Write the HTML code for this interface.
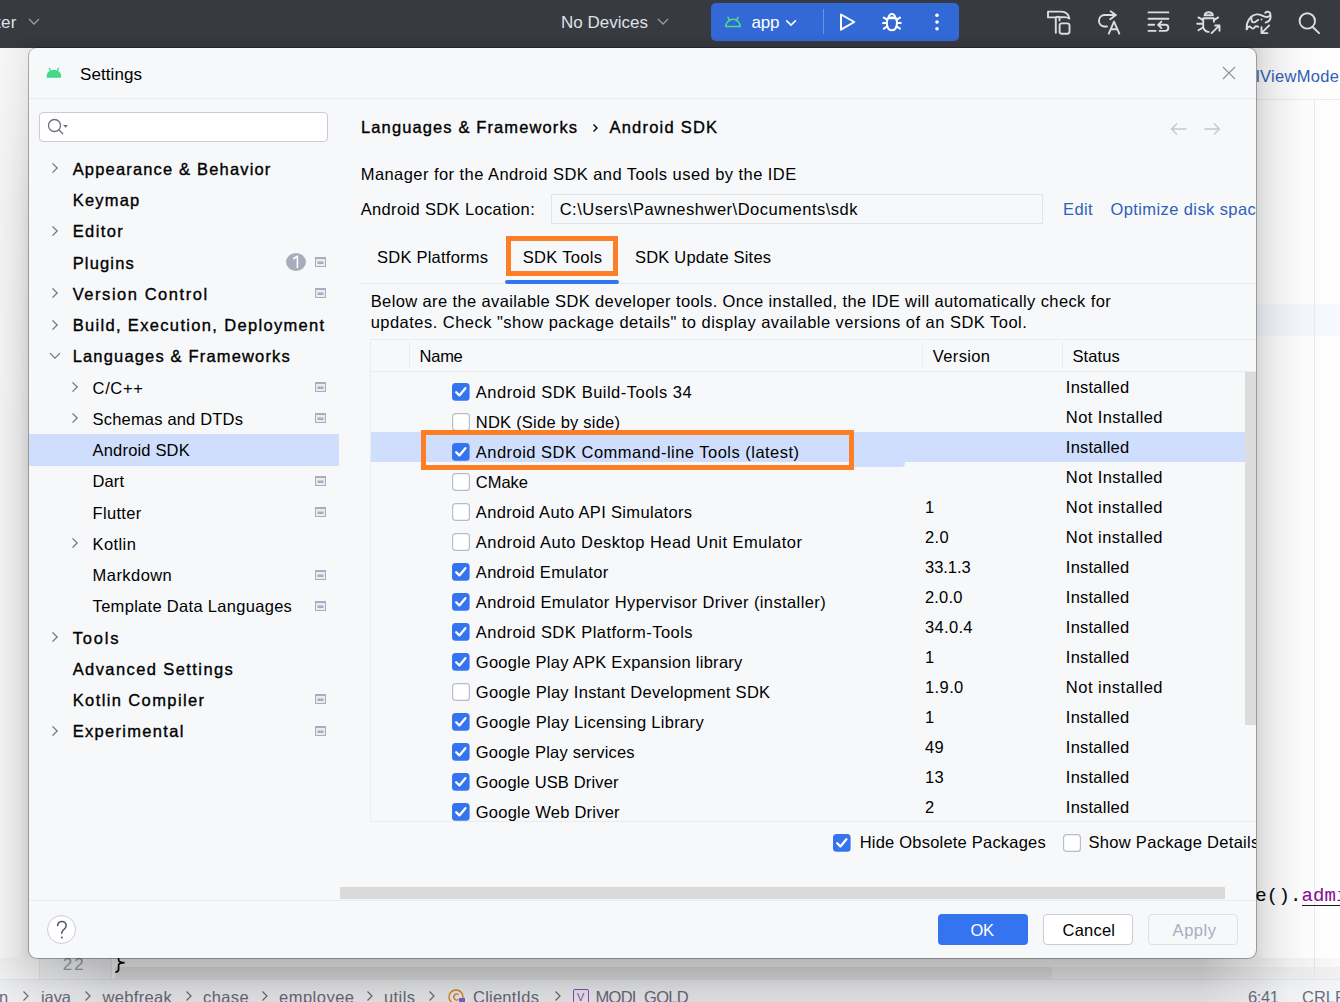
<!DOCTYPE html>
<html><head><meta charset="utf-8"><title>Settings</title><style>
*{margin:0;padding:0;box-sizing:border-box}
html,body{width:1340px;height:1002px;overflow:hidden;background:#fff;font-family:"Liberation Sans",sans-serif}
.a{position:absolute}
.t{position:absolute;white-space:nowrap;line-height:1}
svg{position:absolute;overflow:visible}
#dlg{position:absolute;left:0;top:0;width:1340px;height:1002px;clip-path:inset(48px 84px 44px 29px round 0 0 8px 8px)}
</style></head>
<body>
<div class="a" style="left:0px;top:48px;width:1340px;height:931px;background:#ffffff"></div>
<div class="a" style="left:0px;top:48px;width:29px;height:931px;background:#f9f9fa"></div>
<div class="a" style="left:1256px;top:99px;width:84px;height:1px;background:#ebecf0"></div>
<div class="t" style="left:1256.00px;top:68.00px;font-size:16.5px;color:#2f5fb8;font-weight:400;letter-spacing:0.324px;">lViewMode</div>
<div class="a" style="left:1256px;top:304px;width:84px;height:32px;background:#f6f9fe"></div>
<div class="a" style="left:0px;top:958px;width:1340px;height:21px;background:#ffffff"></div>
<div class="a" style="left:39px;top:958px;width:73px;height:21px;background:#f7f8fa;border-left:1px solid #ebecf0;border-right:1px solid #ebecf0"></div>
<div class="t" style="left:62.70px;top:956.00px;font-size:17px;color:#a0a2a8;font-weight:400;letter-spacing:1.994px;">22</div>
<div class="a" style="left:115px;top:967px;width:937px;height:12px;background:#ececec"></div>
<div class="a" style="left:1052px;top:967px;width:288px;height:12px;background:#f6f6f6"></div>
<svg style="left:0;top:0" width="1" height="1"><path d="M115.5 955.5 C117.8 955.5 118.6 956.5 118.6 958.5 V960 C118.6 961.8 119.8 962.6 124.6 962.6 M124.6 962.6 C119.8 962.6 118.6 963.4 118.6 965.2 V969.2 C118.6 971.2 117.6 972 115.3 972" fill="none" stroke="#080808" stroke-width="1.7"/></svg>
<div class="a" style="left:1314px;top:100px;width:1px;height:879px;background:#ebecf0"></div>
<div class="t" style="left:1255.30px;top:887.03px;font-size:19px;color:#080808;font-weight:400;letter-spacing:0.150px;font-family:'Liberation Mono';-webkit-text-stroke:0.1px currentColor">e().<span style='color:#871094'>admi</span></div>
<div class="a" style="left:1302px;top:904.8px;width:40px;height:1.6px;background:#1a1a1a"></div>
<div class="a" style="left:0px;top:979px;width:1340px;height:23px;background:#f7f8fa;border-top:1px solid #ebecf0"></div>
<div class="t" style="left:-1.00px;top:989.00px;font-size:16.5px;color:#6c707e;font-weight:400;letter-spacing:-1.672px;">n</div>
<div class="t" style="left:41.00px;top:989.00px;font-size:16.5px;color:#6c707e;font-weight:400;letter-spacing:-0.089px;">java</div>
<div class="t" style="left:102.60px;top:989.00px;font-size:16.5px;color:#6c707e;font-weight:400;letter-spacing:0.323px;">webfreak</div>
<div class="t" style="left:203.00px;top:989.00px;font-size:16.5px;color:#6c707e;font-weight:400;letter-spacing:0.396px;">chase</div>
<div class="t" style="left:279.00px;top:989.00px;font-size:16.5px;color:#6c707e;font-weight:400;letter-spacing:0.496px;">employee</div>
<div class="t" style="left:384.00px;top:989.00px;font-size:16.5px;color:#6c707e;font-weight:400;letter-spacing:0.414px;">utils</div>
<div class="t" style="left:473.00px;top:989.00px;font-size:16.5px;color:#6c707e;font-weight:400;letter-spacing:0.227px;">ClientIds</div>
<div class="t" style="left:595.60px;top:989.00px;font-size:16.5px;color:#6c707e;font-weight:400;letter-spacing:-0.750px;">MODI_GOLD</div>
<svg style="left:22px;top:990px" width="8" height="12"><path d="M1.5 1.5 L6 6 L1.5 10.5" fill="none" stroke="#6c707e" stroke-width="1.2"/></svg>
<svg style="left:83.6px;top:990px" width="8" height="12"><path d="M1.5 1.5 L6 6 L1.5 10.5" fill="none" stroke="#6c707e" stroke-width="1.2"/></svg>
<svg style="left:185px;top:990px" width="8" height="12"><path d="M1.5 1.5 L6 6 L1.5 10.5" fill="none" stroke="#6c707e" stroke-width="1.2"/></svg>
<svg style="left:261px;top:990px" width="8" height="12"><path d="M1.5 1.5 L6 6 L1.5 10.5" fill="none" stroke="#6c707e" stroke-width="1.2"/></svg>
<svg style="left:366px;top:990px" width="8" height="12"><path d="M1.5 1.5 L6 6 L1.5 10.5" fill="none" stroke="#6c707e" stroke-width="1.2"/></svg>
<svg style="left:428px;top:990px" width="8" height="12"><path d="M1.5 1.5 L6 6 L1.5 10.5" fill="none" stroke="#6c707e" stroke-width="1.2"/></svg>
<svg style="left:554px;top:990px" width="8" height="12"><path d="M1.5 1.5 L6 6 L1.5 10.5" fill="none" stroke="#6c707e" stroke-width="1.2"/></svg>
<svg style="left:448px;top:988px" width="18" height="16" viewBox="0 0 18 16"><circle cx="8" cy="9" r="7" fill="none" stroke="#e38a1f" stroke-width="1.4"/><path d="M10.5 6.5 A3 3 0 1 0 10.5 11.5" fill="none" stroke="#e38a1f" stroke-width="1.4"/><rect x="11" y="10" width="6" height="5" fill="#7a6cd6"/></svg>
<div class="a" style="left:573px;top:989px;width:16px;height:16px;border:1.3px solid #9b4bd1;border-radius:2px"></div>
<div class="t" style="left:577.00px;top:991.69px;font-size:11px;color:#9b4bd1;font-weight:400;letter-spacing:0.000px;">V</div>
<div class="t" style="left:1248.00px;top:989.00px;font-size:16.5px;color:#6c707e;font-weight:400;letter-spacing:-0.365px;">6:41</div>
<div class="t" style="left:1302.00px;top:989.00px;font-size:16.5px;color:#6c707e;font-weight:400;letter-spacing:-0.031px;">CRLF</div>
<div class="a" style="left:0px;top:0px;width:1340px;height:48px;background:#383a41"></div>
<div class="t" style="left:-4.00px;top:14.00px;font-size:17px;color:#dfe1e5;font-weight:400;letter-spacing:0.336px;">ter</div>
<div class="t" style="left:561.00px;top:14.00px;font-size:17px;color:#dfe1e5;font-weight:400;letter-spacing:0.009px;">No Devices</div>
<div class="a" style="left:711px;top:3px;width:248px;height:38px;background:#3369d6;border-radius:5px"></div>
<div class="a" style="left:823px;top:9px;width:1px;height:25px;background:#6d93e0"></div>
<div class="t" style="left:751.50px;top:14.00px;font-size:17px;color:#ffffff;font-weight:400;letter-spacing:-0.180px;">app</div>
<svg style="left:0;top:0" width="1340" height="48" viewBox="0 0 1340 48">
<g fill="none" stroke="#9a9da5" stroke-width="1.3"><path d="M29 19 L34 24 L39 19"/><path d="M658 19 L663 24 L668 19"/></g>
<g fill="none" stroke="#4fd98f" stroke-width="1.5" stroke-linecap="round">
<path d="M725.8 26.5 A7.2 7.2 0 0 1 740.2 26.5 Z"/><path d="M729.6 20.6 L728 17.2 M736.4 20.6 L738 17.2"/></g>
<path d="M786.2 20.4 L791 25.1 L795.9 20.4" fill="none" stroke="#fff" stroke-width="1.5"/>
<g fill="none" stroke="#fff" stroke-width="2" stroke-linejoin="round" stroke-linecap="round">
<path d="M841 14.5 L854.3 22 L841 29.7 Z"/>
<path d="M888.6 17.6 A3.3 3.6 0 0 1 895.2 17.6 Z"/>
<path d="M887.6 18.2 H896.2 C897.1 20.6 897.2 23.6 896.7 25.8 C896 28.8 894.2 30.3 891.9 30.3 C889.6 30.3 887.8 28.8 887.1 25.8 C886.6 23.6 886.7 20.6 887.6 18.2 Z"/>
<path d="M883.8 17.6 L887.4 19.8 M883 22.9 H886.8 M883.8 28.6 L887.4 26.4 M900 17.6 L896.4 19.8 M900.8 22.9 H897 M900 28.6 L896.4 26.4"/>
</g>
<g fill="#fff"><circle cx="937" cy="15.3" r="1.8"/><circle cx="937" cy="22" r="1.8"/><circle cx="937" cy="28.7" r="1.8"/></g>
<g fill="none" stroke="#dcdde1" stroke-width="1.9" stroke-linecap="round" stroke-linejoin="round">
<path d="M1048 11.6 H1061.5 C1065.5 11.6 1069 14.5 1069.3 18.6 C1067.5 17.3 1065 16.8 1062.5 17.3 H1059.5 C1058.5 16.5 1057 16.6 1055.8 17.4 H1051.5 L1050.5 17.4 H1048 Z"/>
<path d="M1055.8 17.6 V32.8"/><path d="M1059.5 17.6 V20.6"/>
<rect x="1059.6" y="23.4" width="9.9" height="10.4" rx="2.2"/>
<path d="M1115.6 15 H1104 A5.8 5.8 0 0 0 1104 26.5 H1107"/>
<path d="M1110.6 11.2 L1115.8 15 L1110.2 19.2"/>
<path d="M1108.8 33.6 L1114 21.6 L1119.3 33.6 M1110.6 29.3 H1117.5"/>
<path d="M1148.5 12.4 H1168.4 M1148.5 18.8 H1168.4 M1148.5 24.8 H1154.2 M1148.5 30.9 H1155.6"/>
<path d="M1158.4 24.8 H1165.3 A3.05 3.05 0 0 1 1165.3 30.9 H1159.6"/>
<path d="M1161.4 21.6 L1158.2 24.8 L1161.4 28.1"/>
<path d="M1204.6 15.2 A4.2 3.4 0 0 1 1212.9 15.2 Z"/>
<path d="M1213.9 21.8 V18.2 H1203.2 V26.4 A5.5 5.5 0 0 0 1208.7 31.9"/>
<path d="M1198.4 17.4 L1203.1 20.1 M1197.2 23.8 H1203.1 M1198.4 30.2 L1203.1 27.5 M1213.9 20.1 L1218.2 17.4"/>
<path d="M1211.6 33.1 L1219.5 25.4 M1215.2 25.5 H1219.5 V30.8"/>
<path d="M1246.7 29.2 C1246 22 1250 15.5 1256.5 14.4 C1260.5 13.8 1263 16.8 1266.5 17 C1269.3 17.2 1270.8 15.2 1270.2 13.3 C1269.6 11.4 1266.8 11.2 1265.2 12.8"/>
<path d="M1270.6 15.8 C1270.8 19.5 1268.5 22 1265.6 22.6"/>
<path d="M1251.4 17 C1251 20.5 1252.2 22.6 1253.6 22.4 C1255.5 22.2 1256.8 20.5 1258.2 19.9"/>
<path d="M1246.7 29.2 C1248 26 1249.8 26 1251 27.5 C1252.4 29.2 1253.6 28.8 1254.6 27.2 C1255.8 25.6 1257 26.3 1258.2 26.7"/>
<path d="M1269.2 25.4 L1261.5 33.1 M1261.5 27.2 V33.1 H1267.5"/>
<circle cx="1307.3" cy="20.9" r="7.7"/><path d="M1312.9 27.2 L1319.1 33.1"/>
</g>
<circle cx="1261.5" cy="19.4" r="0.9" fill="#dcdde1"/>
</svg>
<div class="a" style="left:0px;top:48px;width:40px;height:910px;background:linear-gradient(to right,rgba(0,0,0,0.036) 0px,rgba(0,0,0,0.06) 10px,rgba(0,0,0,0.10) 20px,rgba(0,0,0,0.16) 28px,rgba(0,0,0,0.2) 40px);-webkit-mask-image:linear-gradient(to bottom,rgba(0,0,0,0.35) 0px,rgba(0,0,0,0.8) 150px,#000 400px)"></div>
<div class="a" style="left:1245px;top:48px;width:95px;height:910px;background:linear-gradient(to right,rgba(0,0,0,0.2) 0px,rgba(0,0,0,0.157) 12px,rgba(0,0,0,0.106) 20px,rgba(0,0,0,0.059) 35px,rgba(0,0,0,0.02) 55px,rgba(0,0,0,0.01) 67px,rgba(0,0,0,0) 95px)"></div>
<div class="a" style="left:0px;top:958px;width:1340px;height:44px;background:linear-gradient(to bottom,rgba(0,0,0,0.28) 0px,rgba(0,0,0,0.25) 9px,rgba(0,0,0,0.2) 21px,rgba(0,0,0,0.15) 30px,rgba(0,0,0,0.11) 44px);-webkit-mask-image:linear-gradient(to right,rgba(0,0,0,0.3) 0px,rgba(0,0,0,0.65) 39px,#000 110px,#000 1200px,rgba(0,0,0,0.6) 1256px,rgba(0,0,0,0.25) 1290px,rgba(0,0,0,0.08) 1340px)"></div>
<div class="a" style="left:10px;top:36px;width:1266px;height:12px;background:linear-gradient(to bottom,rgba(0,0,0,0) 0px,rgba(0,0,0,0.1) 12px);-webkit-mask-image:linear-gradient(to right,transparent 0px,#000 30px,#000 1236px,transparent 1266px)"></div>
<div class="a" style="left:29px;top:48px;width:1227px;height:910px;background:#f7f8fa;border-radius:8px;box-shadow:0 0 0 1px rgba(0,0,0,0.28)"></div>
<div id="dlg">
<svg style="left:0;top:0" width="1" height="1"><path d="M46.8 77.8 V75.6 C46.8 72.2 50 70 53.9 70 C57.8 70 61 72.2 61 75.6 V77.8 Z" fill="#3ddc84"/><path d="M50.9 71.8 L49.3 68.3 M56.9 71.8 L58.5 68.3" stroke="#3ddc84" stroke-width="1.3" stroke-linecap="round"/><circle cx="50.5" cy="74.5" r="0.65" fill="#8aa8d8"/><circle cx="57.5" cy="74.5" r="0.65" fill="#c8b0c0"/></svg>
<div class="t" style="left:80.00px;top:66.00px;font-size:17px;color:#000000;font-weight:400;letter-spacing:0.083px;">Settings</div>
<svg style="left:1222px;top:66px" width="14" height="14"><path d="M1 1 L13 13 M13 1 L1 13" stroke="#8f929c" stroke-width="1.1"/></svg>
<div class="a" style="left:29px;top:98px;width:1227px;height:1px;background:#ebecf0"></div>
<div class="a" style="left:39px;top:112px;width:289px;height:30px;background:#fff;border:1px solid #c9ccd6;border-radius:4px"></div>
<svg style="left:47px;top:118px" width="24" height="18" viewBox="0 0 24 18"><circle cx="7.5" cy="7.5" r="6" fill="none" stroke="#6c707e" stroke-width="1.3"/><path d="M11.8 11.8 L16 16" stroke="#6c707e" stroke-width="1.3"/><path d="M16 7 H21 L18.5 9.8 Z" fill="#6c707e"/></svg>
<div class="a" style="left:29px;top:434px;width:310px;height:32px;background:#cfdefc"></div>
<div class="t" style="left:72.70px;top:161.00px;font-size:16.5px;color:#000000;font-weight:400;letter-spacing:1.169px;-webkit-text-stroke:0.35px #000000;">Appearance &amp; Behavior</div>
<svg style="left:50.8px;top:162.30px" width="8" height="12"><path d="M1.5 1.3 L6.2 6 L1.5 10.7" fill="none" stroke="#6c707e" stroke-width="1.2"/></svg>
<div class="t" style="left:72.70px;top:192.00px;font-size:16.5px;color:#000000;font-weight:400;letter-spacing:1.197px;-webkit-text-stroke:0.35px #000000;">Keymap</div>
<div class="t" style="left:72.70px;top:223.00px;font-size:16.5px;color:#000000;font-weight:400;letter-spacing:1.381px;-webkit-text-stroke:0.35px #000000;">Editor</div>
<svg style="left:50.8px;top:224.78px" width="8" height="12"><path d="M1.5 1.3 L6.2 6 L1.5 10.7" fill="none" stroke="#6c707e" stroke-width="1.2"/></svg>
<div class="t" style="left:72.70px;top:255.00px;font-size:16.5px;color:#000000;font-weight:400;letter-spacing:1.165px;-webkit-text-stroke:0.35px #000000;">Plugins</div>
<svg style="left:315px;top:257px" width="11" height="10" viewBox="0 0 11 10"><rect x="0.5" y="0.5" width="10" height="9" fill="#ebecf0" stroke="#a5afbf" stroke-width="1"/><rect x="0" y="0" width="11" height="2" fill="#a5afbf"/><rect x="2.5" y="4.5" width="6" height="2.5" fill="#a5afbf"/></svg>
<div class="t" style="left:72.70px;top:286.00px;font-size:16.5px;color:#000000;font-weight:400;letter-spacing:1.543px;-webkit-text-stroke:0.35px #000000;">Version Control</div>
<svg style="left:50.8px;top:287.26px" width="8" height="12"><path d="M1.5 1.3 L6.2 6 L1.5 10.7" fill="none" stroke="#6c707e" stroke-width="1.2"/></svg>
<svg style="left:315px;top:288px" width="11" height="10" viewBox="0 0 11 10"><rect x="0.5" y="0.5" width="10" height="9" fill="#ebecf0" stroke="#a5afbf" stroke-width="1"/><rect x="0" y="0" width="11" height="2" fill="#a5afbf"/><rect x="2.5" y="4.5" width="6" height="2.5" fill="#a5afbf"/></svg>
<div class="t" style="left:72.70px;top:317.00px;font-size:16.5px;color:#000000;font-weight:400;letter-spacing:1.331px;-webkit-text-stroke:0.35px #000000;">Build, Execution, Deployment</div>
<svg style="left:50.8px;top:318.50px" width="8" height="12"><path d="M1.5 1.3 L6.2 6 L1.5 10.7" fill="none" stroke="#6c707e" stroke-width="1.2"/></svg>
<div class="t" style="left:72.70px;top:348.00px;font-size:16.5px;color:#000000;font-weight:400;letter-spacing:1.164px;-webkit-text-stroke:0.35px #000000;">Languages &amp; Frameworks</div>
<svg style="left:49.2px;top:352.34px" width="12" height="8"><path d="M1 1.2 L6 6.2 L11 1.2" fill="none" stroke="#6c707e" stroke-width="1.2"/></svg>
<div class="t" style="left:92.60px;top:380.00px;font-size:16.5px;color:#000000;font-weight:400;letter-spacing:0.624px;">C/C++</div>
<svg style="left:70.8px;top:380.98px" width="8" height="12"><path d="M1.5 1.3 L6.2 6 L1.5 10.7" fill="none" stroke="#6c707e" stroke-width="1.2"/></svg>
<svg style="left:315px;top:382px" width="11" height="10" viewBox="0 0 11 10"><rect x="0.5" y="0.5" width="10" height="9" fill="#ebecf0" stroke="#a5afbf" stroke-width="1"/><rect x="0" y="0" width="11" height="2" fill="#a5afbf"/><rect x="2.5" y="4.5" width="6" height="2.5" fill="#a5afbf"/></svg>
<div class="t" style="left:92.60px;top:411.00px;font-size:16.5px;color:#000000;font-weight:400;letter-spacing:0.179px;">Schemas and DTDs</div>
<svg style="left:70.8px;top:412.22px" width="8" height="12"><path d="M1.5 1.3 L6.2 6 L1.5 10.7" fill="none" stroke="#6c707e" stroke-width="1.2"/></svg>
<svg style="left:315px;top:413px" width="11" height="10" viewBox="0 0 11 10"><rect x="0.5" y="0.5" width="10" height="9" fill="#ebecf0" stroke="#a5afbf" stroke-width="1"/><rect x="0" y="0" width="11" height="2" fill="#a5afbf"/><rect x="2.5" y="4.5" width="6" height="2.5" fill="#a5afbf"/></svg>
<div class="t" style="left:92.60px;top:442.00px;font-size:16.5px;color:#000000;font-weight:400;letter-spacing:0.174px;">Android SDK</div>
<div class="t" style="left:92.60px;top:473.00px;font-size:16.5px;color:#000000;font-weight:400;letter-spacing:0.076px;">Dart</div>
<svg style="left:315px;top:476px" width="11" height="10" viewBox="0 0 11 10"><rect x="0.5" y="0.5" width="10" height="9" fill="#ebecf0" stroke="#a5afbf" stroke-width="1"/><rect x="0" y="0" width="11" height="2" fill="#a5afbf"/><rect x="2.5" y="4.5" width="6" height="2.5" fill="#a5afbf"/></svg>
<div class="t" style="left:92.60px;top:505.00px;font-size:16.5px;color:#000000;font-weight:400;letter-spacing:0.308px;">Flutter</div>
<svg style="left:315px;top:507px" width="11" height="10" viewBox="0 0 11 10"><rect x="0.5" y="0.5" width="10" height="9" fill="#ebecf0" stroke="#a5afbf" stroke-width="1"/><rect x="0" y="0" width="11" height="2" fill="#a5afbf"/><rect x="2.5" y="4.5" width="6" height="2.5" fill="#a5afbf"/></svg>
<div class="t" style="left:92.60px;top:536.00px;font-size:16.5px;color:#000000;font-weight:400;letter-spacing:0.387px;">Kotlin</div>
<svg style="left:70.8px;top:537.18px" width="8" height="12"><path d="M1.5 1.3 L6.2 6 L1.5 10.7" fill="none" stroke="#6c707e" stroke-width="1.2"/></svg>
<div class="t" style="left:92.60px;top:567.00px;font-size:16.5px;color:#000000;font-weight:400;letter-spacing:0.442px;">Markdown</div>
<svg style="left:315px;top:570px" width="11" height="10" viewBox="0 0 11 10"><rect x="0.5" y="0.5" width="10" height="9" fill="#ebecf0" stroke="#a5afbf" stroke-width="1"/><rect x="0" y="0" width="11" height="2" fill="#a5afbf"/><rect x="2.5" y="4.5" width="6" height="2.5" fill="#a5afbf"/></svg>
<div class="t" style="left:92.60px;top:598.00px;font-size:16.5px;color:#000000;font-weight:400;letter-spacing:0.302px;">Template Data Languages</div>
<svg style="left:315px;top:601px" width="11" height="10" viewBox="0 0 11 10"><rect x="0.5" y="0.5" width="10" height="9" fill="#ebecf0" stroke="#a5afbf" stroke-width="1"/><rect x="0" y="0" width="11" height="2" fill="#a5afbf"/><rect x="2.5" y="4.5" width="6" height="2.5" fill="#a5afbf"/></svg>
<div class="t" style="left:72.70px;top:630.00px;font-size:16.5px;color:#000000;font-weight:400;letter-spacing:1.846px;-webkit-text-stroke:0.35px #000000;">Tools</div>
<svg style="left:50.8px;top:630.90px" width="8" height="12"><path d="M1.5 1.3 L6.2 6 L1.5 10.7" fill="none" stroke="#6c707e" stroke-width="1.2"/></svg>
<div class="t" style="left:72.70px;top:661.00px;font-size:16.5px;color:#000000;font-weight:400;letter-spacing:1.411px;-webkit-text-stroke:0.35px #000000;">Advanced Settings</div>
<div class="t" style="left:72.70px;top:692.00px;font-size:16.5px;color:#000000;font-weight:400;letter-spacing:1.395px;-webkit-text-stroke:0.35px #000000;">Kotlin Compiler</div>
<svg style="left:315px;top:694px" width="11" height="10" viewBox="0 0 11 10"><rect x="0.5" y="0.5" width="10" height="9" fill="#ebecf0" stroke="#a5afbf" stroke-width="1"/><rect x="0" y="0" width="11" height="2" fill="#a5afbf"/><rect x="2.5" y="4.5" width="6" height="2.5" fill="#a5afbf"/></svg>
<div class="t" style="left:72.70px;top:723.00px;font-size:16.5px;color:#000000;font-weight:400;letter-spacing:1.302px;-webkit-text-stroke:0.35px #000000;">Experimental</div>
<svg style="left:50.8px;top:724.62px" width="8" height="12"><path d="M1.5 1.3 L6.2 6 L1.5 10.7" fill="none" stroke="#6c707e" stroke-width="1.2"/></svg>
<svg style="left:315px;top:726px" width="11" height="10" viewBox="0 0 11 10"><rect x="0.5" y="0.5" width="10" height="9" fill="#ebecf0" stroke="#a5afbf" stroke-width="1"/><rect x="0" y="0" width="11" height="2" fill="#a5afbf"/><rect x="2.5" y="4.5" width="6" height="2.5" fill="#a5afbf"/></svg>
<div class="a" style="left:286px;top:253px;width:20px;height:18px;background:#a5adbd;border-radius:50%"></div>
<svg style="left:0;top:0" width="1" height="1"><path d="M293.2 259 L297.4 256.2 V268" fill="none" stroke="#fff" stroke-width="1.6" stroke-linejoin="round"/></svg>
<div class="t" style="left:361.00px;top:119.00px;font-size:16.5px;color:#000;font-weight:400;letter-spacing:1.117px;-webkit-text-stroke:0.35px #000;">Languages &amp; Frameworks</div>
<svg style="left:592px;top:123px" width="7" height="10"><path d="M1.5 1.5 L5 5 L1.5 8.5" fill="none" stroke="#000" stroke-width="1.4"/></svg>
<div class="t" style="left:609.50px;top:119.00px;font-size:16.5px;color:#000;font-weight:400;letter-spacing:1.214px;-webkit-text-stroke:0.35px #000;">Android SDK</div>
<svg style="left:1170px;top:122px" width="18" height="14"><path d="M1.5 7 H16.5 M7 1.5 L1.5 7 L7 12.5" fill="none" stroke="#c4c7ce" stroke-width="1.3"/></svg>
<svg style="left:1203px;top:122px" width="18" height="14"><path d="M1.5 7 H16.5 M11 1.5 L16.5 7 L11 12.5" fill="none" stroke="#c4c7ce" stroke-width="1.3"/></svg>
<div class="t" style="left:360.70px;top:166.00px;font-size:16.5px;color:#000;font-weight:400;letter-spacing:0.443px;">Manager for the Android SDK and Tools used by the IDE</div>
<div class="t" style="left:360.70px;top:201.00px;font-size:16.5px;color:#000;font-weight:400;letter-spacing:0.356px;">Android SDK Location:</div>
<div class="a" style="left:551px;top:194px;width:492px;height:30px;border:1.5px solid #e3e4e8;background:#f7f8fa"></div>
<div class="t" style="left:559.70px;top:201.00px;font-size:16.5px;color:#000;font-weight:400;letter-spacing:0.510px;">C:\Users\Pawneshwer\Documents\sdk</div>
<div class="t" style="left:1063.00px;top:201.00px;font-size:16.5px;color:#2f5fb8;font-weight:400;letter-spacing:0.393px;">Edit</div>
<div class="t" style="left:1110.50px;top:201.00px;font-size:16.5px;color:#2f5fb8;font-weight:400;letter-spacing:0.400px;">Optimize disk space</div>
<div class="t" style="left:377.00px;top:249.00px;font-size:16.5px;color:#000;font-weight:400;letter-spacing:0.236px;">SDK Platforms</div>
<div class="t" style="left:522.70px;top:249.00px;font-size:16.5px;color:#000;font-weight:400;letter-spacing:0.323px;">SDK Tools</div>
<div class="t" style="left:635.00px;top:249.00px;font-size:16.5px;color:#000;font-weight:400;letter-spacing:0.204px;">SDK Update Sites</div>
<div class="a" style="left:360px;top:283px;width:896px;height:1px;background:#ebecf0"></div>
<div class="a" style="left:505px;top:280px;width:114px;height:4px;background:#3574f0;border-radius:2px"></div>
<div class="a" style="left:506px;top:236px;width:112px;height:40px;border:5px solid #fe7e26"></div>
<div class="t" style="left:370.70px;top:293.00px;font-size:16.5px;color:#000;font-weight:400;letter-spacing:0.381px;">Below are the available SDK developer tools. Once installed, the IDE will automatically check for</div>
<div class="t" style="left:370.70px;top:314.00px;font-size:16.5px;color:#000;font-weight:400;letter-spacing:0.468px;">updates. Check "show package details" to display available versions of an SDK Tool.</div>
<div class="a" style="left:370px;top:339px;width:900px;height:483px;border:1px solid #ebecf0"></div>
<div class="a" style="left:371px;top:371px;width:900px;height:1px;background:#ebecf0"></div>
<div class="a" style="left:409px;top:342px;width:1px;height:26px;background:#ebecf0"></div>
<div class="a" style="left:922px;top:342px;width:1px;height:26px;background:#ebecf0"></div>
<div class="a" style="left:1062px;top:342px;width:1px;height:26px;background:#ebecf0"></div>
<div class="t" style="left:419.60px;top:348.00px;font-size:16.5px;color:#000;font-weight:400;letter-spacing:-0.272px;">Name</div>
<div class="t" style="left:932.80px;top:348.00px;font-size:16.5px;color:#000;font-weight:400;letter-spacing:0.361px;">Version</div>
<div class="t" style="left:1072.50px;top:348.00px;font-size:16.5px;color:#000;font-weight:400;letter-spacing:0.110px;">Status</div>
<div class="a" style="left:371px;top:432px;width:874px;height:30px;background:#cfdefc"></div>
<div class="a" style="left:853px;top:461px;width:52px;height:6px;background:#cfdefc;border-bottom-right-radius:4px"></div>
<div class="a" style="left:371px;top:372px;width:885px;height:449px;overflow:hidden">
<svg style="left:80.6px;top:11px" width="18" height="18" viewBox="0 0 18 18"><rect x="0" y="0" width="17.6" height="17.8" rx="3.5" fill="#3574f0"/><path d="M4.2 9.2 L7.4 12.4 L13.4 5.2" fill="none" stroke="#fff" stroke-width="2.3" stroke-linecap="round" stroke-linejoin="round"/></svg>
<div class="t" style="left:104.80px;top:12.00px;font-size:16.5px;color:#000;font-weight:400;letter-spacing:0.490px;">Android SDK Build-Tools 34</div>
<div class="t" style="left:694.80px;top:7.00px;font-size:16.5px;color:#000;font-weight:400;letter-spacing:0.245px;">Installed</div>
<svg style="left:81px;top:41px" width="18" height="18" viewBox="0 0 18 18"><rect x="0.6" y="0.6" width="16.8" height="16.8" rx="3" fill="#fff" stroke="#b9bdc9" stroke-width="1.2"/></svg>
<div class="t" style="left:104.80px;top:42.00px;font-size:16.5px;color:#000;font-weight:400;letter-spacing:0.231px;">NDK (Side by side)</div>
<div class="t" style="left:694.80px;top:37.00px;font-size:16.5px;color:#000;font-weight:400;letter-spacing:0.418px;">Not Installed</div>
<svg style="left:80.6px;top:71px" width="18" height="18" viewBox="0 0 18 18"><rect x="0" y="0" width="17.6" height="17.8" rx="3.5" fill="#3574f0"/><path d="M4.2 9.2 L7.4 12.4 L13.4 5.2" fill="none" stroke="#fff" stroke-width="2.3" stroke-linecap="round" stroke-linejoin="round"/></svg>
<div class="t" style="left:104.80px;top:72.00px;font-size:16.5px;color:#000;font-weight:400;letter-spacing:0.478px;">Android SDK Command-line Tools (latest)</div>
<div class="t" style="left:694.80px;top:67.00px;font-size:16.5px;color:#000;font-weight:400;letter-spacing:0.245px;">Installed</div>
<svg style="left:81px;top:101px" width="18" height="18" viewBox="0 0 18 18"><rect x="0.6" y="0.6" width="16.8" height="16.8" rx="3" fill="#fff" stroke="#b9bdc9" stroke-width="1.2"/></svg>
<div class="t" style="left:104.80px;top:102.00px;font-size:16.5px;color:#000;font-weight:400;letter-spacing:-0.016px;">CMake</div>
<div class="t" style="left:694.80px;top:97.00px;font-size:16.5px;color:#000;font-weight:400;letter-spacing:0.418px;">Not Installed</div>
<svg style="left:81px;top:131px" width="18" height="18" viewBox="0 0 18 18"><rect x="0.6" y="0.6" width="16.8" height="16.8" rx="3" fill="#fff" stroke="#b9bdc9" stroke-width="1.2"/></svg>
<div class="t" style="left:104.80px;top:132.00px;font-size:16.5px;color:#000;font-weight:400;letter-spacing:0.345px;">Android Auto API Simulators</div>
<div class="t" style="left:554.00px;top:127.00px;font-size:16.5px;color:#000;font-weight:400;letter-spacing:0.400px;">1</div>
<div class="t" style="left:694.80px;top:127.00px;font-size:16.5px;color:#000;font-weight:400;letter-spacing:0.493px;">Not installed</div>
<svg style="left:81px;top:161px" width="18" height="18" viewBox="0 0 18 18"><rect x="0.6" y="0.6" width="16.8" height="16.8" rx="3" fill="#fff" stroke="#b9bdc9" stroke-width="1.2"/></svg>
<div class="t" style="left:104.80px;top:162.00px;font-size:16.5px;color:#000;font-weight:400;letter-spacing:0.472px;">Android Auto Desktop Head Unit Emulator</div>
<div class="t" style="left:554.00px;top:157.00px;font-size:16.5px;color:#000;font-weight:400;letter-spacing:0.400px;">2.0</div>
<div class="t" style="left:694.80px;top:157.00px;font-size:16.5px;color:#000;font-weight:400;letter-spacing:0.493px;">Not installed</div>
<svg style="left:80.6px;top:191px" width="18" height="18" viewBox="0 0 18 18"><rect x="0" y="0" width="17.6" height="17.8" rx="3.5" fill="#3574f0"/><path d="M4.2 9.2 L7.4 12.4 L13.4 5.2" fill="none" stroke="#fff" stroke-width="2.3" stroke-linecap="round" stroke-linejoin="round"/></svg>
<div class="t" style="left:104.80px;top:192.00px;font-size:16.5px;color:#000;font-weight:400;letter-spacing:0.323px;">Android Emulator</div>
<div class="t" style="left:554.00px;top:187.00px;font-size:16.5px;color:#000;font-weight:400;letter-spacing:-0.049px;">33.1.3</div>
<div class="t" style="left:694.80px;top:187.00px;font-size:16.5px;color:#000;font-weight:400;letter-spacing:0.245px;">Installed</div>
<svg style="left:80.6px;top:221px" width="18" height="18" viewBox="0 0 18 18"><rect x="0" y="0" width="17.6" height="17.8" rx="3.5" fill="#3574f0"/><path d="M4.2 9.2 L7.4 12.4 L13.4 5.2" fill="none" stroke="#fff" stroke-width="2.3" stroke-linecap="round" stroke-linejoin="round"/></svg>
<div class="t" style="left:104.80px;top:222.00px;font-size:16.5px;color:#000;font-weight:400;letter-spacing:0.400px;">Android Emulator Hypervisor Driver (installer)</div>
<div class="t" style="left:554.00px;top:217.00px;font-size:16.5px;color:#000;font-weight:400;letter-spacing:0.182px;">2.0.0</div>
<div class="t" style="left:694.80px;top:217.00px;font-size:16.5px;color:#000;font-weight:400;letter-spacing:0.245px;">Installed</div>
<svg style="left:80.6px;top:251px" width="18" height="18" viewBox="0 0 18 18"><rect x="0" y="0" width="17.6" height="17.8" rx="3.5" fill="#3574f0"/><path d="M4.2 9.2 L7.4 12.4 L13.4 5.2" fill="none" stroke="#fff" stroke-width="2.3" stroke-linecap="round" stroke-linejoin="round"/></svg>
<div class="t" style="left:104.80px;top:252.00px;font-size:16.5px;color:#000;font-weight:400;letter-spacing:0.453px;">Android SDK Platform-Tools</div>
<div class="t" style="left:554.00px;top:247.00px;font-size:16.5px;color:#000;font-weight:400;letter-spacing:0.331px;">34.0.4</div>
<div class="t" style="left:694.80px;top:247.00px;font-size:16.5px;color:#000;font-weight:400;letter-spacing:0.245px;">Installed</div>
<svg style="left:80.6px;top:281px" width="18" height="18" viewBox="0 0 18 18"><rect x="0" y="0" width="17.6" height="17.8" rx="3.5" fill="#3574f0"/><path d="M4.2 9.2 L7.4 12.4 L13.4 5.2" fill="none" stroke="#fff" stroke-width="2.3" stroke-linecap="round" stroke-linejoin="round"/></svg>
<div class="t" style="left:104.80px;top:282.00px;font-size:16.5px;color:#000;font-weight:400;letter-spacing:0.276px;">Google Play APK Expansion library</div>
<div class="t" style="left:554.00px;top:277.00px;font-size:16.5px;color:#000;font-weight:400;letter-spacing:0.400px;">1</div>
<div class="t" style="left:694.80px;top:277.00px;font-size:16.5px;color:#000;font-weight:400;letter-spacing:0.245px;">Installed</div>
<svg style="left:81px;top:311px" width="18" height="18" viewBox="0 0 18 18"><rect x="0.6" y="0.6" width="16.8" height="16.8" rx="3" fill="#fff" stroke="#b9bdc9" stroke-width="1.2"/></svg>
<div class="t" style="left:104.80px;top:312.00px;font-size:16.5px;color:#000;font-weight:400;letter-spacing:0.294px;">Google Play Instant Development SDK</div>
<div class="t" style="left:554.00px;top:307.00px;font-size:16.5px;color:#000;font-weight:400;letter-spacing:0.400px;">1.9.0</div>
<div class="t" style="left:694.80px;top:307.00px;font-size:16.5px;color:#000;font-weight:400;letter-spacing:0.493px;">Not installed</div>
<svg style="left:80.6px;top:341px" width="18" height="18" viewBox="0 0 18 18"><rect x="0" y="0" width="17.6" height="17.8" rx="3.5" fill="#3574f0"/><path d="M4.2 9.2 L7.4 12.4 L13.4 5.2" fill="none" stroke="#fff" stroke-width="2.3" stroke-linecap="round" stroke-linejoin="round"/></svg>
<div class="t" style="left:104.80px;top:342.00px;font-size:16.5px;color:#000;font-weight:400;letter-spacing:0.309px;">Google Play Licensing Library</div>
<div class="t" style="left:554.00px;top:337.00px;font-size:16.5px;color:#000;font-weight:400;letter-spacing:0.400px;">1</div>
<div class="t" style="left:694.80px;top:337.00px;font-size:16.5px;color:#000;font-weight:400;letter-spacing:0.245px;">Installed</div>
<svg style="left:80.6px;top:371px" width="18" height="18" viewBox="0 0 18 18"><rect x="0" y="0" width="17.6" height="17.8" rx="3.5" fill="#3574f0"/><path d="M4.2 9.2 L7.4 12.4 L13.4 5.2" fill="none" stroke="#fff" stroke-width="2.3" stroke-linecap="round" stroke-linejoin="round"/></svg>
<div class="t" style="left:104.80px;top:372.00px;font-size:16.5px;color:#000;font-weight:400;letter-spacing:0.202px;">Google Play services</div>
<div class="t" style="left:554.00px;top:367.00px;font-size:16.5px;color:#000;font-weight:400;letter-spacing:0.400px;">49</div>
<div class="t" style="left:694.80px;top:367.00px;font-size:16.5px;color:#000;font-weight:400;letter-spacing:0.245px;">Installed</div>
<svg style="left:80.6px;top:401px" width="18" height="18" viewBox="0 0 18 18"><rect x="0" y="0" width="17.6" height="17.8" rx="3.5" fill="#3574f0"/><path d="M4.2 9.2 L7.4 12.4 L13.4 5.2" fill="none" stroke="#fff" stroke-width="2.3" stroke-linecap="round" stroke-linejoin="round"/></svg>
<div class="t" style="left:104.80px;top:402.00px;font-size:16.5px;color:#000;font-weight:400;letter-spacing:0.151px;">Google USB Driver</div>
<div class="t" style="left:554.00px;top:397.00px;font-size:16.5px;color:#000;font-weight:400;letter-spacing:0.400px;">13</div>
<div class="t" style="left:694.80px;top:397.00px;font-size:16.5px;color:#000;font-weight:400;letter-spacing:0.245px;">Installed</div>
<svg style="left:80.6px;top:431px" width="18" height="18" viewBox="0 0 18 18"><rect x="0" y="0" width="17.6" height="17.8" rx="3.5" fill="#3574f0"/><path d="M4.2 9.2 L7.4 12.4 L13.4 5.2" fill="none" stroke="#fff" stroke-width="2.3" stroke-linecap="round" stroke-linejoin="round"/></svg>
<div class="t" style="left:104.80px;top:432.00px;font-size:16.5px;color:#000;font-weight:400;letter-spacing:0.238px;">Google Web Driver</div>
<div class="t" style="left:554.00px;top:427.00px;font-size:16.5px;color:#000;font-weight:400;letter-spacing:0.400px;">2</div>
<div class="t" style="left:694.80px;top:427.00px;font-size:16.5px;color:#000;font-weight:400;letter-spacing:0.245px;">Installed</div>
</div>
<div class="a" style="left:421px;top:430px;width:433px;height:40px;border:5px solid #fe7e26"></div>
<div class="a" style="left:1245px;top:372px;width:11px;height:353px;background:#dcdcdc"></div>
<svg style="left:833.1px;top:833.5px" width="18" height="18" viewBox="0 0 18 18"><rect x="0" y="0" width="17.6" height="17.8" rx="3.5" fill="#3574f0"/><path d="M4.2 9.2 L7.4 12.4 L13.4 5.2" fill="none" stroke="#fff" stroke-width="2.3" stroke-linecap="round" stroke-linejoin="round"/></svg>
<div class="t" style="left:859.70px;top:834.00px;font-size:16.5px;color:#000;font-weight:400;letter-spacing:0.212px;">Hide Obsolete Packages</div>
<svg style="left:1062.5px;top:833.5px" width="18" height="18" viewBox="0 0 18 18"><rect x="0.6" y="0.6" width="16.8" height="16.8" rx="3" fill="#fff" stroke="#b9bdc9" stroke-width="1.2"/></svg>
<div class="t" style="left:1088.50px;top:834.00px;font-size:16.5px;color:#000;font-weight:400;letter-spacing:0.300px;">Show Package Details</div>
<div class="a" style="left:340px;top:887px;width:885px;height:12px;background:#dadada"></div>
<div class="a" style="left:29px;top:900px;width:1227px;height:1px;background:#ebecf0"></div>
<div class="a" style="left:47px;top:915px;width:29px;height:29px;background:#fff;border:1px solid #c9ccd6;border-radius:50%"></div>
<svg style="left:0;top:0" width="1" height="1"><path d="M57.6 925.6 C57.9 923 59.8 921.6 62 921.6 C64.5 921.6 66.3 923.4 66.2 925.8 C66.1 928.2 63.6 929.4 62.6 930.8 C62 931.7 61.7 932.3 61.7 933.3" fill="none" stroke="#4e5670" stroke-width="1.5" stroke-linecap="round"/><circle cx="61.8" cy="937.4" r="1" fill="#4e5670"/></svg>
<div class="a" style="left:938px;top:914px;width:90px;height:31px;background:#3574f0;border-radius:4px"></div>
<div class="t" style="left:970.60px;top:922.00px;font-size:16.5px;color:#fff;font-weight:400;letter-spacing:-0.428px;">OK</div>
<div class="a" style="left:1043px;top:914px;width:90px;height:31px;background:#fff;border:1px solid #c9ccd6;border-radius:4px"></div>
<div class="t" style="left:1062.60px;top:922.00px;font-size:16.5px;color:#000;font-weight:400;letter-spacing:0.208px;">Cancel</div>
<div class="a" style="left:1148px;top:914px;width:90px;height:31px;background:#f7f8fa;border:1px solid #dfe1e5;border-radius:4px"></div>
<div class="t" style="left:1172.60px;top:922.00px;font-size:16.5px;color:#a8adbd;font-weight:400;letter-spacing:0.534px;">Apply</div>
</div>

</body></html>
